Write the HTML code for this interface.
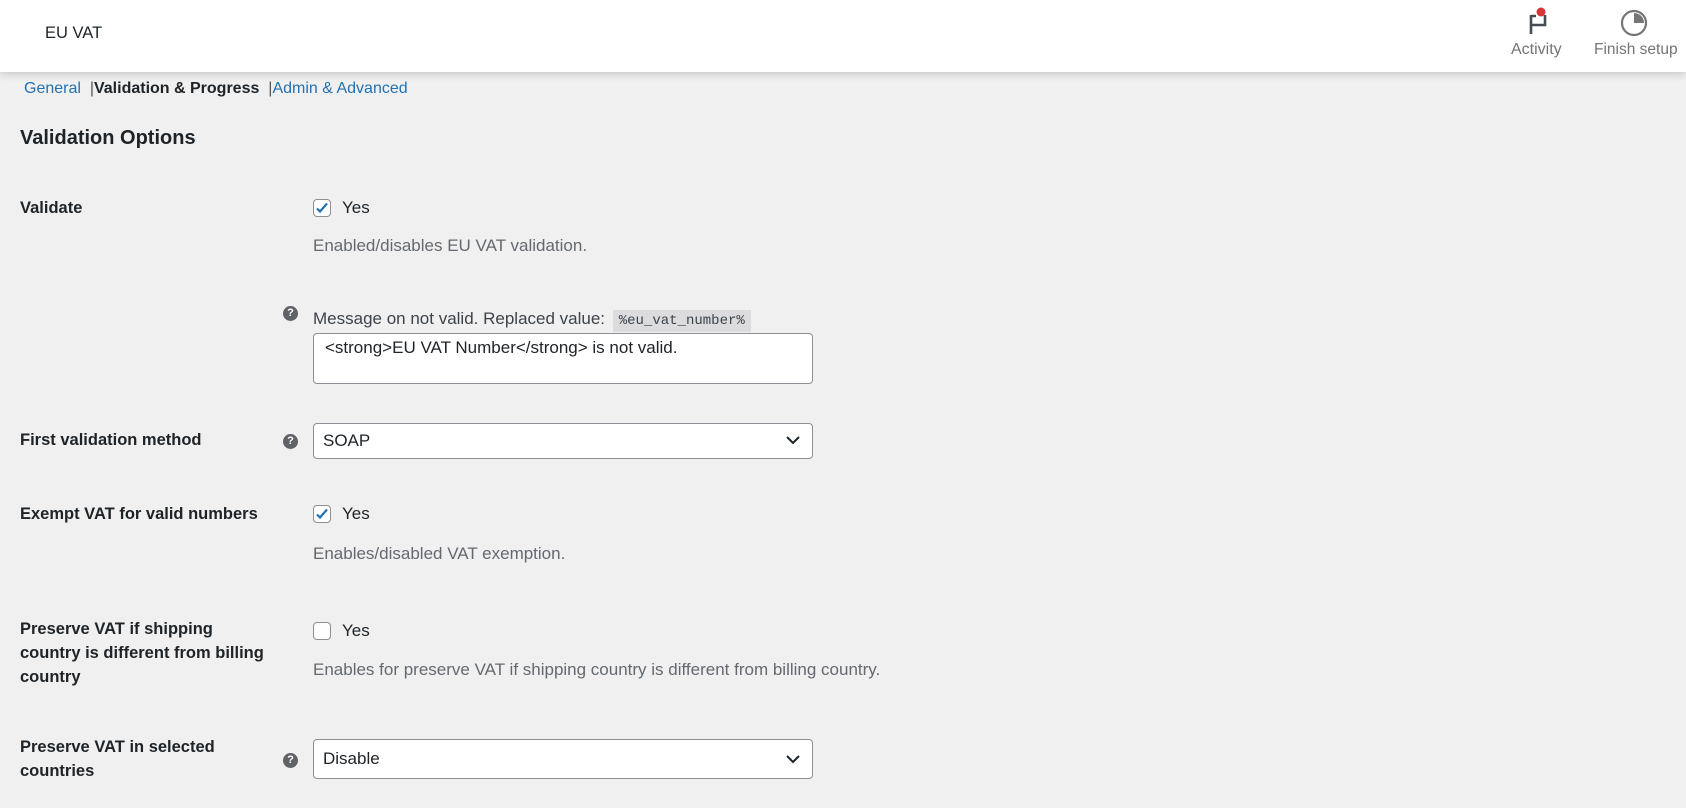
<!DOCTYPE html>
<html><head><meta charset="utf-8"><style>
*{box-sizing:border-box;margin:0;padding:0}
body{width:1686px;height:808px;overflow:hidden;background:#f0f0f1;font-family:"Liberation Sans",sans-serif;color:#1d2327;position:relative;font-size:17px}
.hdr{position:absolute;left:0;top:0;width:1686px;height:72px;background:#fff;box-shadow:0 2px 8px rgba(0,0,0,.18)}
.a{position:absolute;white-space:nowrap}
.lbl{font-weight:bold;font-size:16.5px;line-height:24px}
.desc{color:#646970;font-size:17px}
.cb{position:absolute;width:18px;height:18px;border:1px solid #8c8f94;border-radius:4px;background:#fff}
.help{position:absolute;width:15px;height:15px;border-radius:50%;background:#5f6368;color:#fff;font-size:11px;font-weight:bold;text-align:center;line-height:15px}
.box{position:absolute;background:#fff;border:1px solid #8c8f94;border-radius:4px}
</style></head><body>
<div class="hdr"></div>
<div class="a" style="left:45px;top:24px;font-size:16.5px">EU VAT</div>
<svg class="a" style="left:1522px;top:2px" width="34" height="34" viewBox="0 0 34 34"><path d="M9 32V13M9 14h5M23 13v10H9" fill="none" stroke="#444c55" stroke-width="2.6"/><circle cx="19" cy="10" r="4.5" fill="#d63638"/></svg>
<div class="a" style="left:1511px;top:41px;font-size:16px;color:#757575">Activity</div>
<svg class="a" style="left:1619px;top:8px" width="30" height="30" viewBox="0 0 30 30"><circle cx="15" cy="15" r="12" fill="none" stroke="#757575" stroke-width="2.2"/><path d="M15 5A10 10 0 0 1 25 15H15Z" fill="#757575"/></svg>
<div class="a" style="left:1594px;top:41px;font-size:15.5px;color:#757575">Finish setup</div>

<div class="a" style="left:24px;top:80px;font-size:16px"><span style="color:#2271b1">General</span> <span style="color:#555">&nbsp;|</span><b>Validation &amp; Progress</b> <span style="color:#555">&nbsp;|</span><span style="color:#2271b1">Admin &amp; Advanced</span></div>
<div class="a" style="left:20px;top:127px;font-size:20px;font-weight:bold">Validation Options</div>

<div class="a lbl" style="left:20px;top:196px">Validate</div>
<div class="cb" style="left:313px;top:199px"><svg width="16" height="16" viewBox="0 0 16 16"><path d="M3 8.5l3 3 7-8" fill="none" stroke="#2271b1" stroke-width="2.2"/></svg></div>
<div class="a" style="left:342px;top:198px">Yes</div>
<div class="a desc" style="left:313px;top:236px">Enabled/disables EU VAT validation.</div>

<div class="help" style="left:283px;top:306px">?</div>
<div class="a" style="left:313px;top:309px;color:#3c434a">Message on not valid. Replaced value: <span style="font-family:'Liberation Mono',monospace;font-size:14px;background:#dcdcde;padding:3px 6px;margin-left:3px">%eu_vat_number%</span></div>
<div class="box" style="left:313px;top:333px;width:500px;height:51px"></div>
<div class="a" style="left:325px;top:338px">&lt;strong&gt;EU VAT Number&lt;/strong&gt; is not valid.</div>

<div class="a lbl" style="left:20px;top:428px">First validation method</div>
<div class="help" style="left:283px;top:434px">?</div>
<div class="box" style="left:313px;top:423px;width:500px;height:36px"></div>
<div class="a" style="left:323px;top:431px">SOAP</div>
<svg class="a" style="left:786px;top:435px" width="14" height="10" viewBox="0 0 14 10"><path d="M1 2l6 6 6-6" fill="none" stroke="#1d2327" stroke-width="2"/></svg>

<div class="a lbl" style="left:20px;top:502px">Exempt VAT for valid numbers</div>
<div class="cb" style="left:313px;top:505px"><svg width="16" height="16" viewBox="0 0 16 16"><path d="M3 8.5l3 3 7-8" fill="none" stroke="#2271b1" stroke-width="2.2"/></svg></div>
<div class="a" style="left:342px;top:504px">Yes</div>
<div class="a desc" style="left:313px;top:544px">Enables/disabled VAT exemption.</div>

<div class="a lbl" style="left:20px;top:617px;white-space:normal;width:280px;line-height:24px">Preserve VAT if shipping<br>country is different from billing<br>country</div>
<div class="cb" style="left:313px;top:622px"></div>
<div class="a" style="left:342px;top:621px">Yes</div>
<div class="a desc" style="left:313px;top:660px">Enables for preserve VAT if shipping country is different from billing country.</div>

<div class="a lbl" style="left:20px;top:735px;line-height:24px">Preserve VAT in selected<br>countries</div>
<div class="help" style="left:283px;top:753px">?</div>
<div class="box" style="left:313px;top:739px;width:500px;height:40px"></div>
<div class="a" style="left:323px;top:749px">Disable</div>
<svg class="a" style="left:786px;top:754px" width="14" height="10" viewBox="0 0 14 10"><path d="M1 2l6 6 6-6" fill="none" stroke="#1d2327" stroke-width="2"/></svg>
</body></html>
